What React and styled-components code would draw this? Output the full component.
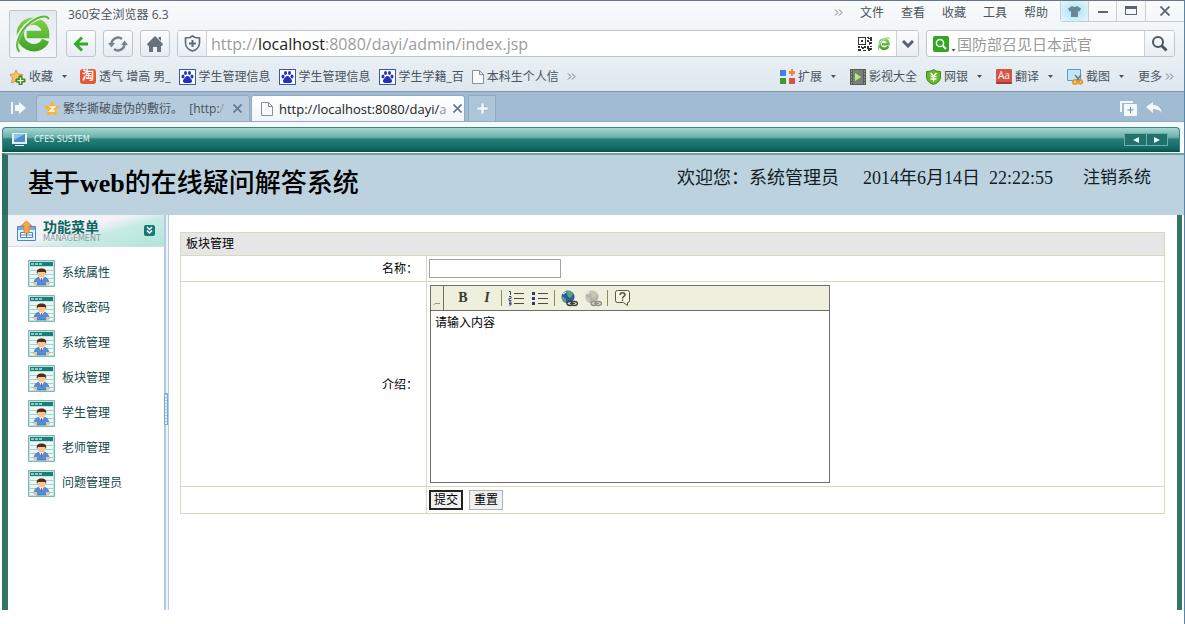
import React from 'react';
import styled, { createGlobalStyle, css } from 'styled-components';

const GlobalStyle = createGlobalStyle`
  *, *::before, *::after { box-sizing: border-box; }
  body {
    margin: 0;
    background: #fff;
    font-family: "Open Sans", "Noto Sans CJK SC", sans-serif;
    font-size: 12px;
    color: #4b545d;
  }
  button, input, textarea { font: inherit; color: inherit; }
  button { padding: 0; border: 0; background: none; white-space: nowrap; }
  a { color: inherit; text-decoration: none; }
  svg { display: block; flex: none; }
`;

/* ---------- browser window ---------- */

const Window = styled.div`
  display: flex;
  flex-direction: column;
  min-height: 100vh;
  border-top: 1px solid #66788a;
  border-right: 1px solid #5686a8;
`;

const Chrome = styled.header`
  background: linear-gradient(#f9fbfc, #edf2f6 50%, #dee7ef);
  border-bottom: 1px solid #8099ae;
`;

const ChromeTop = styled.div`
  display: flex;
  gap: 9px;
  padding-left: 9px;
`;

const LogoButton = styled.button`
  flex: none;
  width: 48px;
  height: 48px;
  margin-top: 9px;
  display: grid;
  place-items: center;
  background: linear-gradient(#e3eaf0, #f2f5f8);
  border: 1px solid #bcc7d2;
  border-radius: 2px;
`;

const ChromeMain = styled.div`
  flex: 1;
  min-width: 0;
`;

const TitleRow = styled.div`
  display: flex;
  justify-content: space-between;
  align-items: flex-start;
  height: 29px;
  padding-left: 2px;
`;

const WindowTitle = styled.span`
  line-height: 28px;
`;

const TitleMenu = styled.nav`
  display: flex;
  align-items: flex-start;
  gap: 17px;
  line-height: 24px;
  > svg { margin-top: 8px; }
`;

const WindowControls = styled.div`
  display: flex;
  height: 21px;
  margin-left: -5px;
  border: 1px solid #c5ced7;
  border-width: 0 0 1px 1px;
  border-radius: 0 0 0 3px;
`;

const ControlButton = styled.button`
  width: ${(p) => p.$width}px;
  display: grid;
  place-items: center;
  border-left: ${(p) => (p.$first ? 0 : '1px solid #c5ced7')};
  background: ${(p) => (p.$first ? 'radial-gradient(#a5e2f5, #e9f7fb)' : 'none')};
`;

const ToolRow = styled.div`
  display: flex;
  gap: 7px;
  height: 27px;
  padding-right: 9px;
`;

const ToolButton = styled.button`
  flex: none;
  width: 30px;
  display: grid;
  place-items: center;
  background: linear-gradient(#fcfdfd, #e6ecf2);
  border: 1px solid #bcc7d2;
  border-radius: 3px;
`;

const Field = styled.div`
  display: flex;
  align-items: center;
  min-width: 0;
  flex: ${(p) => (p.$search ? '0 0 249px' : '1 1 0')};
  background: #fff;
  border: 1px solid #bcc7d2;
  border-radius: 3px;
  overflow: hidden;
`;

const FieldButton = styled.button`
  flex: none;
  align-self: stretch;
  width: ${(p) => p.$width}px;
  display: grid;
  place-items: center;
  background: linear-gradient(#fbfcfd, #e9eef3);
  border: 0 solid #c9d2db;
  border-width: ${(p) => (p.$left ? '0 1px 0 0' : '0 0 0 1px')};
`;

const Url = styled.span`
  flex: 1;
  padding-left: 4px;
  font-size: 16px;
  line-height: 24px;
  color: #9c9c9c;
  white-space: nowrap;
  overflow: hidden;
  b { font-weight: 400; color: #1b1b1b; }
`;

const FieldIcons = styled.span`
  display: flex;
  align-items: center;
  gap: 5px;
  padding-right: 5px;
`;

const SearchIcons = styled.span`
  display: flex;
  align-items: flex-end;
  gap: 2px;
  padding-left: 6px;
`;

const SearchInput = styled.input`
  flex: 1;
  min-width: 0;
  padding: 0 0 0 1px;
  border: 0;
  outline: 0;
  font-size: 15px;
  &::placeholder { color: #999; opacity: 1; }
`;

const BookmarkRow = styled.div`
  display: flex;
  justify-content: space-between;
  height: 33px;
  padding: 4px 10px 0;
`;

const BookmarkGroup = styled.div`
  display: flex;
  align-items: center;
  gap: ${(p) => p.$gap}px;
`;

const Caret = styled.i`
  width: 5px;
  height: 3px;
  background: #4b545d;
  clip-path: polygon(0 0, 100% 0, 50% 100%);
`;

const Bookmark = styled.button`
  display: flex;
  align-items: center;
  gap: 3px;
  line-height: 18px;
  ${Caret} { margin: 0 5px 0 6px; }
`;

const TabBar = styled.div`
  display: flex;
  align-items: flex-end;
  height: 30px;
  background: #a1bcd2;
  border-bottom: 1px solid #93aac0;
`;

const TabBarButton = styled.button`
  width: ${(p) => p.$width}px;
  height: 26px;
  display: grid;
  place-items: center;
`;

const Tab = styled.div`
  display: flex;
  align-items: center;
  gap: ${(p) => (p.$active ? 6 : 3)}px;
  width: 214px;
  height: 26px;
  margin-right: 1px;
  padding: 0 7px 0 ${(p) => (p.$active ? 9 : 7)}px;
  border: 1px solid #8fabc3;
  border-bottom: 0;
  border-radius: 3px 3px 0 0;
  background: ${(p) => (p.$active ? 'linear-gradient(#fff, #f1f5f9)' : '#b5cbdd')};
  color: ${(p) => (p.$active ? '#222' : '#46515c')};
`;

const TabLabel = styled.a`
  flex: 1;
  white-space: pre;
  font-size: ${(p) => (p.$large ? 13 : 12)}px;
  line-height: 20px;
`;

const Faded = styled.span`
  color: #8f979f;
`;

const NewTab = styled.button`
  width: 28px;
  height: 26px;
  margin-left: 2px;
  display: grid;
  place-items: center;
  border: 1px solid #8fabc3;
  border-bottom: 0;
  background: #adc5d9;
`;

const TabTools = styled.div`
  display: flex;
  gap: 9px;
  align-items: center;
  height: 26px;
  margin-left: auto;
  padding-right: 22px;
`;

/* ---------- web page ---------- */

const Page = styled.main`
  flex: 1;
  display: flex;
  flex-direction: column;
  margin-bottom: 14px;
  padding: 5px 2px 0;
  background: linear-gradient(#f3faf9, #fff 60px);
  font-family: "Liberation Sans", "Noto Sans CJK SC", sans-serif;
`;

const SystemBar = styled.div`
  display: flex;
  align-items: center;
  justify-content: space-between;
  height: 25px;
  margin-right: 2px;
  padding: 0 11px 0 9px;
  border: 1px solid #43817e;
  border-bottom-color: #0a4f4b;
  border-radius: 4px 4px 0 0;
  background: linear-gradient(#a5d6d3, #6db0ac 40%, #288079 48%, #0f6a63 88%, #16524c);
`;

const SystemName = styled.div`
  display: flex;
  align-items: center;
  gap: 7px;
  font-family: "DejaVu Sans", sans-serif;
  font-size: 8px;
  color: #e2f5f3;
`;

const Pager = styled.div`
  display: flex;
  border: 1px solid #6bb0ab;
`;

const PagerButton = styled.button`
  width: 21px;
  height: 11px;
  display: grid;
  place-items: center;
  background: #23716c;
  & + & { border-left: 1px solid #6bb0ab; }
`;

const Banner = styled.div`
  display: flex;
  justify-content: space-between;
  align-items: flex-start;
  height: 62px;
  margin: 1px -2px 0 0;
  padding: 0 33px 0 20px;
  border-top: 2px solid #6fa39f;
  border-left: 6px solid #2f6f62;
  background: #bcd3df;
  font-family: "Liberation Serif", "Noto Sans CJK SC", serif;
  color: #101c26;
`;

const BannerTitle = styled.h1`
  margin: 0;
  font-size: 26px;
  font-weight: 500;
  line-height: 58px;
  color: #000;
`;

const BannerInfo = styled.div`
  display: flex;
  font-size: 18px;
  line-height: 46px;
  white-space: pre;
`;

const DateText = styled.time`
  margin: 0 30px 0 24px;
`;

const LogoutLink = styled.a`
  font-size: 17px;
`;

const Frame = styled.div`
  flex: 1;
  display: flex;
  border: solid #357565;
  border-width: 0 5px 0 6px;
`;

const Sidebar = styled.aside`
  flex: none;
  width: 156px;
`;

const SidebarHead = styled.div`
  display: flex;
  align-items: center;
  height: 32px;
  padding: 0 9px;
  border-bottom: 1px solid #d3dedd;
  background: linear-gradient(165deg, #f2f2f7 45%, #c7ebe4 62%, #b1e4db);
`;

const SidebarTitle = styled.h2`
  flex: 1;
  margin: 0 0 0 7px;
  font-size: 14px;
  line-height: 16px;
  color: #0d675f;
`;

const SidebarSubtitle = styled.small`
  display: block;
  font-family: "DejaVu Sans", sans-serif;
  font-size: 8px;
  font-weight: 400;
  line-height: 8px;
  color: #8d9a9a;
`;

const SideMenu = styled.ul`
  display: flex;
  flex-direction: column;
  gap: 8px;
  margin: 0;
  padding: 13px 0 0 20px;
  list-style: none;
`;

const SideLink = styled.a`
  display: flex;
  align-items: center;
  gap: 7px;
  line-height: 27px;
  color: #11474a;
`;

const Splitter = styled.div`
  flex: none;
  width: 5px;
  display: flex;
  align-items: center;
  padding-bottom: 8px;
  border: solid #b4cce3;
  border-width: 0 1px 0 2px;
  background: #edf4fb;
`;

const SplitterHandle = styled.button`
  width: 4px;
  height: 32px;
  margin-left: -2px;
  flex: none;
  border: 1px solid #7fa9c8;
  background: repeating-linear-gradient(#a9cbe0 0 1px, #dcecf6 1px 3px);
`;

const Content = styled.section`
  flex: 1;
  min-width: 0;
  padding: 17px 12px 20px 11px;
`;

const FormTable = styled.table`
  width: 100%;
  table-layout: fixed;
  border-collapse: collapse;
  color: #000;
`;

const cell = css`
  border: 1px solid #d8d8c3;
  padding: 3px 2px;
  font-weight: 400;
`;

const HeadCell = styled.th`
  ${cell}
  padding: 2px 5px;
  height: 23px;
  text-align: left;
  line-height: 18px;
  background: #e6e6e6;
`;

const LabelCell = styled.th`
  ${cell}
  padding: 2px 8px 4px 2px;
  text-align: right;
`;

const InputCell = styled.td`
  ${cell}
`;

const NameInput = styled.input`
  display: block;
  width: 132px;
  height: 19px;
  padding: 0 3px;
  border: 1px solid #a3a3a3;
  outline: 0;
`;

const Editor = styled.div`
  width: 400px;
  max-width: 100%;
  border: 1px solid #6e6e6e;
  margin-left: 1px;
`;

const EditorToolbar = styled.div`
  display: flex;
  align-items: center;
  height: 25px;
  background: #efefde;
  border-bottom: 1px solid #6e6e5e;
`;

const Gripper = styled.span`
  align-self: stretch;
  display: flex;
  align-items: flex-end;
  width: 13px;
  margin-right: 7px;
  padding: 0 0 4px 2px;
  border-right: 1px solid #6e6e5e;
`;

const EditorButton = styled.button`
  width: 24px;
  height: 22px;
  display: grid;
  place-items: center;
  font-family: "Liberation Serif", serif;
  font-size: 14px;
  font-weight: 700;
  color: #3b3b30;
  font-style: ${(p) => (p.$italic ? 'italic' : 'normal')};
`;

const ToolDivider = styled.i`
  width: 1px;
  height: 16px;
  margin: 0 2px;
  background: #8c8c5e;
`;

const EditorArea = styled.textarea`
  display: block;
  width: 100%;
  height: 171px;
  padding: 3px 4px;
  border: 0;
  outline: 0;
  resize: none;
  line-height: 18px;
  background: #fff;
`;

const FormActions = styled.div`
  display: flex;
  gap: 6px;
`;

const FormButton = styled.button`
  width: 34px;
  height: 20px;
  line-height: 16px;
  background: #f0f0f0;
  border: ${(p) => (p.$primary ? '2px solid #222' : '1px solid #b3b3b3')};
`;

/* ---------- icons ---------- */

const BrowserLogo = ({ size }) => (
  <svg width={size} height={size} viewBox="0 0 38 38" fill="none">
    <defs>
      <linearGradient id="leaf" x1="0" y1="0" x2="0" y2="38" gradientUnits="userSpaceOnUse">
        <stop offset="0" stopColor="#8bd650" />
        <stop offset="1" stopColor="#3a9f22" />
      </linearGradient>
    </defs>
    <path d="M31 25C28 32 20 33.500 14 30.500C5 26 5 14 12 9C20 4 31 8 31 19.500H13" stroke="url(#leaf)" strokeWidth="7" />
    <path d="M5 37C-1 29 7 12 21 5C28 2 33 2 35 6" stroke="#eef3f5" strokeWidth="4" />
    <path d="M6 36C0 29 8 12 22 4.500C28 1.500 33 1.500 34 5" stroke="#5cb936" strokeWidth="2" />
  </svg>
);

const BackIcon = () => (
  <svg width="17" height="16" viewBox="0 0 17 16" fill="none" stroke="#3aaa24" strokeWidth="3">
    <path d="M9 1.500 2.500 8 9 14.500M3 8h12" />
  </svg>
);

const ReloadIcon = () => (
  <svg width="20" height="18" viewBox="0 0 20 18" fill="none" stroke="#77838f" strokeWidth="2.5">
    <path d="M3.500 9A6.500 6.500 0 0 1 14 4M16.500 9A6.500 6.500 0 0 1 6 14" />
    <path d="M0 8h7l-3.500 4.500zM13 10h7l-3.500-4.500z" fill="#77838f" stroke="none" />
  </svg>
);

const HomeIcon = () => (
  <svg width="16" height="16" viewBox="0 0 16 16" fill="#66727f">
    <path d="M8 0 16 8l-1 2h-1v6H10v-5H6v5H2v-6H1L0 8zM11.500 1H14v4l-2.500-2.500z" />
  </svg>
);

const ShieldIcon = () => (
  <svg width="17" height="17" viewBox="0 0 17 17" fill="none" stroke="#5c6a79" strokeWidth="1.600">
    <path d="M8.500 1 11 2.500 15.500 3V8C15.500 12 12 15 8.500 16 5 15 1.500 12 1.500 8V3L6 2.500z" />
    <path d="M8.500 5v7M5 8.500h7" strokeWidth="2" />
  </svg>
);

const QrIcon = () => (
  <svg width="14" height="14" viewBox="0 0 14 14" fill="#333">
    <path fillRule="evenodd" d="M0 0h8v8H0zM1 1v6h6V1zM3 3h2v2H3zM9 0h2v1H9zM12 0h2v4h-2V2h-2V1h2zM9 3h2v2H9zM11 5h3v2h-2v1h-1zM0 9h2v2H0zM3 9h1v1h2V9h2v2H6v1H4v-1H3zM9 9h2v2h3v2h-2v1h-2v-2H9zM0 12h3v2H0zM5 13h3v1H5zM12 9h2v1h-2z" />
  </svg>
);

const ChevronDown = () => (
  <svg width="12" height="8" viewBox="0 0 12 8" fill="none" stroke="#536171" strokeWidth="3"><path d="m1 1 5 5 5-5" /></svg>
);

const SearchEngineIcon = () => (
  <svg width="16" height="16" viewBox="0 0 16 16" fill="none">
    <rect width="16" height="16" rx="2" fill="#2fa71f" />
    <circle cx="7" cy="7" r="3.600" stroke="#fff" strokeWidth="1.500" /><path d="m10 10 3 3" stroke="#fff" strokeWidth="2" />
  </svg>
);

const MagnifierIcon = () => (
  <svg width="17" height="17" viewBox="0 0 17 17" fill="none" stroke="#4d5762">
    <circle cx="7" cy="7" r="5" strokeWidth="2" /><path d="m10.500 10.500 5 5" strokeWidth="3" />
  </svg>
);

const ShirtIcon = () => (
  <svg width="13" height="11" viewBox="0 0 13 11" fill="#688797"><path d="M4 0Q6.500 2 9 0L13 2.500 11.500 5.500 10 5V11H3V5L1.500 5.500 0 2.500z" /></svg>
);

const MinimizeIcon = () => (
  <svg width="10" height="10" viewBox="0 0 10 10"><path d="M0 5h10v2H0z" fill="#5a6673" /></svg>
);

const MaximizeIcon = () => (
  <svg width="12" height="10" viewBox="0 0 12 10"><path fillRule="evenodd" d="M0 0h12v9H0zM1 3v5h10V3z" fill="#5a6673" /></svg>
);

const CloseIcon = ({ size = 9, color = '#5a6673' }) => (
  <svg width={size} height={size} viewBox="0 0 9 9" fill="none" stroke={color} strokeWidth="1.700"><path d="m.5.5 8 8m0-8-8 8" /></svg>
);

const FavoriteIcon = () => (
  <svg width="16" height="16" viewBox="0 0 16 16">
    <path d="m6 1 2 4 5 .5-3.500 3.500 1 5L6 12l-4.500 2 1-5L0 5.500 4.500 5z" fill="#f9c36c" stroke="#dc9348" />
    <path d="M9 7h3v3h3v3h-3v3H9v-3H6v-3h3z" fill="#55a531" stroke="#317b1d" />
    <path d="M10.500 8.500v6m-3-3h6" stroke="#fff" />
  </svg>
);

const TaobaoBox = styled.span`
  width: 16px;
  height: 15px;
  border-radius: 3px;
  background: #ea5532;
  color: #fff;
  font-size: 12px;
  font-weight: 700;
  line-height: 14px;
  text-align: center;
`;

const PawIcon = () => (
  <svg width="17" height="16" viewBox="0 0 17 16">
    <rect x=".5" y=".5" width="16" height="15" fill="#fff" stroke="#3659a7" />
    <g fill="#2531c4">
      <ellipse cx="4" cy="7.500" rx="1.500" ry="2" /><ellipse cx="6.500" cy="4" rx="1.500" ry="2" />
      <ellipse cx="10.500" cy="4" rx="1.500" ry="2" /><ellipse cx="13" cy="7.500" rx="1.500" ry="2" />
      <path d="M8.500 7c2 0 2.500 2 4 3.500 1.500 2-.5 4-2 3.500H6.500C5 14.500 3 12.500 4.500 10.500 6 9 6.500 7 8.500 7z" />
    </g>
  </svg>
);

const PageIcon = () => (
  <svg width="12" height="14" viewBox="0 0 12 14" fill="#f9fafb" stroke="#87919a">
    <path d="M.5.500h7l4 4v9H.500zM7.500.500v4h4" />
  </svg>
);

const MoreIcon = () => (
  <svg width="9" height="7" viewBox="0 0 9 7" fill="none" stroke="#6a747d"><path d="m1 .5 3 3-3 3m4-6 3 3-3 3" /></svg>
);

const ExtensionsIcon = () => (
  <svg width="15" height="15" viewBox="0 0 15 15">
    <path fill="#4a7de6" d="M0 1h6v6H0z" /><path fill="#3b9c2a" d="M0 9h6v6H0z" />
    <path fill="#d9534d" d="M9 9h6v6H9z" /><path fill="#f08b34" d="M11 0h2v2h2v3h-2v2h-2V5H9V2h2z" />
  </svg>
);

const VideoIcon = () => (
  <svg width="16" height="16" viewBox="0 0 16 16">
    <path fill="#555d56" d="M0 0h16v16H0z" /><path fill="#788078" d="M3 1h10v14H3z" />
    <path d="M1.500 1v14m13-14v14" stroke="#8c948c" strokeDasharray="2 1" /><path fill="#b4ed70" d="m5 4 6 4-6 4z" />
  </svg>
);

const BankIcon = () => (
  <svg width="15" height="16" viewBox="0 0 15 16">
    <path d="M7.500.500 10 2l4.500.500V8c0 4-3.500 6.500-7 7.500-3.500-1-7-3.500-7-7.500V2.500L5 2z" fill="#68b52b" stroke="#3f8d17" />
    <path d="m4.500 4 3 3 3-3m-6 3.500h6m-6 2.500h6M7.500 7v5.500" stroke="#fff" strokeWidth="1.500" fill="none" />
  </svg>
);

const TranslateBox = styled.span`
  width: 16px;
  height: 15px;
  background: #d65345;
  border-bottom: 2px solid #a3392f;
  border-radius: 1px;
  color: #fff;
  font-size: 10px;
  line-height: 13px;
  text-align: center;
`;

const ScreenshotIcon = () => (
  <svg width="16" height="16" viewBox="0 0 16 16" fill="none">
    <path d="M.5.500h13v11H.500z" fill="#c2e5f8" stroke="#559ecc" /><path d="m8 6 5 6m1-6-5 6" stroke="#617d8c" strokeWidth="1.500" />
    <circle cx="8" cy="13" r="2" stroke="#ec9624" strokeWidth="2" /><circle cx="13.500" cy="13" r="1.700" stroke="#ec9624" strokeWidth="2" />
  </svg>
);

const PanelIcon = () => (
  <svg width="15" height="12" viewBox="0 0 15 12" fill="#f4f8fb"><path d="M0 0h2v12H0zM4 3h4V0l7 6-7 6V9H4z" /></svg>
);

const StarIcon = () => (
  <svg width="16" height="15" viewBox="0 0 16 15">
    <path d="m8 0 2.500 4.500L16 5.500 12 9.500l1 5.500-5-2.500L3 15l1-5.500L0 5.500l5.500-1z" fill="#f5b52f" />
    <path d="M5.500 6h5l-4.500 4h5" stroke="#fff" strokeWidth="1.500" fill="none" />
  </svg>
);

const PlusIcon = () => (
  <svg width="11" height="11" viewBox="0 0 11 11"><path d="M4 0h3v4h4v3H7v4H4V7H0V4h4z" fill="#f3f7fb" stroke="#94adc2" strokeWidth=".5" /></svg>
);

const CloneTabIcon = () => (
  <svg width="17" height="15" viewBox="0 0 17 15" fill="none">
    <path d="M1 11V1h12" stroke="#f4f8fb" strokeWidth="2" /><rect x="4" y="3" width="13" height="12" rx="1" fill="#f4f8fb" />
    <path d="M10.500 6v6m-3-3h6" stroke="#6e8ba5" />
  </svg>
);

const UndoIcon = () => (
  <svg width="16" height="12" viewBox="0 0 16 12" fill="#f4f8fb"><path d="M7 0v3c5 0 8 3 9 8-2-3-5-4-9-4v4L0 5z" /></svg>
);

const MonitorIcon = () => (
  <svg width="15" height="13" viewBox="0 0 15 13">
    <path fill="#e4edf2" d="M0 0h15v11H0z" /><path fill="#4b91cd" d="M2 1h11v8H2z" /><path fill="#8cc2ea" d="M2 1h11L2 7z" /><path fill="#e4edf2" d="M3 12h9v1H3z" />
  </svg>
);

const ArrowIcon = ({ right }) => (
  <svg width="6" height="6" viewBox="0 0 6 6" fill="#e9f8f6"><path d={right ? 'M0 0l6 3-6 3z' : 'M6 0v6L0 3z'} /></svg>
);

const ManagementIcon = () => (
  <svg width="19" height="20" viewBox="0 0 19 20">
    <path d="M.500 5.500h18v14H.500z" fill="#e4f1fd" stroke="#4787c3" />
    <path d="M1 6h17v3H1z" fill="#72aee1" /><path d="M3.500 11.500h12v5h-12zm0 2.500h12M9.500 11v6" fill="#fff" stroke="#4787c3" />
    <path d="M9.500 0 15 5h-3v7H7V5H4z" fill="#f6a84c" stroke="#d88532" />
  </svg>
);

const CollapseIcon = () => (
  <svg width="11" height="11" viewBox="0 0 11 11">
    <rect width="11" height="11" rx="2" fill="#147a75" /><path d="m3 2 2.500 2.500L8 2M3 5.500 5.500 8 8 5.500" fill="none" stroke="#fff" strokeWidth="1.500" />
  </svg>
);

const UserCardIcon = () => (
  <svg width="27" height="27" viewBox="0 0 27 27">
    <path d="M.500.500h26v26H.500z" fill="#bfe3de" stroke="#80b5b0" />
    <path d="M2 2h23v4H2z" fill="#188079" /><path d="M3 4h3m1 0h3m1 0h3" stroke="#b7e4df" strokeWidth="1.500" />
    <path d="M2 7h23v18H2z" fill="#edf8f6" />
    <path d="M2 10.500h23m-23 4h23m-23 4h23m-23 4h23" stroke="#a4d2cd" />
    <path d="M6 24c0-4 2-6 4-6.500h7c2 .5 4 2.500 4 6.500l-3 1H9z" fill="#4f8fe0" stroke="#2c5fae" strokeWidth=".6" />
    <path d="M6 22h3v3H6zM18 22h3v3h-3z" fill="#f4c08b" /><path d="M11 17h5l-2.500 4z" fill="#fff" /><path d="M13 18h1v4h-1z" fill="#c5473b" />
    <circle cx="13.500" cy="13.500" r="4" fill="#f6c593" />
    <path d="M9 14C8 10 10 8.500 13.500 8.500s5.500 1.500 4.500 5.500l-1-2h-7z" fill="#57291b" />
  </svg>
);

const OrderedListIcon = () => (
  <svg width="16" height="15" viewBox="0 0 16 15" fill="none">
    <path d="M6 2.500h10M6 7.500h10M6 12.500h10" stroke="#4c4c3c" />
    <path d="M1 .5h1.500V4M1 5.500h2v2H1v2h2.500M1 11h2v3H1m0-1.500h2" stroke="#3a3f7e" />
  </svg>
);

const BulletListIcon = () => (
  <svg width="16" height="13" viewBox="0 0 16 13">
    <path d="M6 1.500h10M6 6.500h10M6 11.500h10" stroke="#4c4c3c" /><path d="M0 0h3v3H0zM0 5h3v3H0zM0 10h3v3H0z" fill="#30367f" />
  </svg>
);

const GlobeIcon = ({ muted }) => (
  <svg width="17" height="17" viewBox="0 0 17 17">
    <circle cx="7" cy="7" r="6.500" fill={muted ? '#b5b5ab' : '#3156a8'} />
    <path d="M5 1c3-1 6 1 7 3l-2 4-3-1-1-3zM1 6l4 3v4C2 12 0 9 1 6z" fill={muted ? '#c6c6bb' : '#55a47a'} />
    <path d="M2 4 5 2" stroke="#e3edf5" strokeWidth="1.500" />
    <g fill={muted ? '#d8d8cd' : '#ddd'} stroke={muted ? '#919188' : '#3c3c36'} strokeWidth="1.300">
      <ellipse cx="9" cy="13.500" rx="3" ry="2" /><ellipse cx="13.500" cy="13.500" rx="3" ry="2" />
    </g>
    <path d="M9 13.500h5" stroke={muted ? '#919188' : '#3c3c36'} />
  </svg>
);

const HelpIcon = () => (
  <svg width="15" height="16" viewBox="0 0 15 16" fill="none" stroke="#55553a">
    <path d="M2.500.500h10q2 0 2 2v8q0 2-2 2v3l-4-3h-6q-2 0-2-2v-8q0-2 2-2z" fill="#f8f8e8" />
    <path d="M5 5c0-3 5-3 5 0 0 1.500-2.500 1.500-2.500 3.500M7.500 9.500v1.500" strokeWidth="1.500" />
  </svg>
);

/* ---------- data ---------- */

const titleMenus = ['文件', '查看', '收藏', '工具', '帮助'];

const leftBookmarks = [
  { icon: <TaobaoBox>淘</TaobaoBox>, label: '透气 增高 男_' },
  { icon: <PawIcon />, label: '学生管理信息' },
  { icon: <PawIcon />, label: '学生管理信息' },
  { icon: <PawIcon />, label: '学生学籍_百' },
  { icon: <PageIcon />, label: '本科生个人信' },
];

const rightBookmarks = [
  { icon: <ExtensionsIcon />, label: '扩展', caret: true },
  { icon: <VideoIcon />, label: '影视大全' },
  { icon: <BankIcon />, label: '网银', caret: true },
  { icon: <TranslateBox>Aa</TranslateBox>, label: '翻译', caret: true },
  { icon: <ScreenshotIcon />, label: '截图', caret: true },
];

const sideItems = ['系统属性', '修改密码', '系统管理', '板块管理', '学生管理', '老师管理', '问题管理员'];

const BookmarkItem = ({ icon, label, caret }) => (
  <Bookmark>{icon}{label}{caret && <Caret />}</Bookmark>
);

function BrowserChrome() {
  return (
    <Chrome>
      <ChromeTop>
        <LogoButton aria-label="360"><BrowserLogo size={40} /></LogoButton>
        <ChromeMain>
          <TitleRow>
            <WindowTitle>360安全浏览器 6.3</WindowTitle>
            <TitleMenu>
              <MoreIcon />
              {titleMenus.map((m) => <button key={m}>{m}</button>)}
              <WindowControls>
                <ControlButton $first $width={27} aria-label="皮肤"><ShirtIcon /></ControlButton>
                <ControlButton $width={28} aria-label="最小化"><MinimizeIcon /></ControlButton>
                <ControlButton $width={29} aria-label="最大化"><MaximizeIcon /></ControlButton>
                <ControlButton $width={39} aria-label="关闭"><CloseIcon size={10} /></ControlButton>
              </WindowControls>
            </TitleMenu>
          </TitleRow>
          <ToolRow>
            <ToolButton aria-label="后退"><BackIcon /></ToolButton>
            <ToolButton aria-label="刷新"><ReloadIcon /></ToolButton>
            <ToolButton aria-label="主页"><HomeIcon /></ToolButton>
            <Field>
              <FieldButton $left $width={29} aria-label="安全"><ShieldIcon /></FieldButton>
              <Url>http://<b>localhost</b>:8080/dayi/admin/index.jsp</Url>
              <FieldIcons><QrIcon /><BrowserLogo size={14} /></FieldIcons>
              <FieldButton $width={22} aria-label="展开"><ChevronDown /></FieldButton>
            </Field>
            <Field $search>
              <SearchIcons><SearchEngineIcon /><Caret /></SearchIcons>
              <SearchInput aria-label="搜索" placeholder="国防部召见日本武官" />
              <FieldButton $width={30} aria-label="搜索"><MagnifierIcon /></FieldButton>
            </Field>
          </ToolRow>
        </ChromeMain>
      </ChromeTop>
      <BookmarkRow>
        <BookmarkGroup $gap={8}>
          <BookmarkItem icon={<FavoriteIcon />} label="收藏" caret />
          {leftBookmarks.map((b, i) => <BookmarkItem key={i} {...b} />)}
          <MoreIcon />
        </BookmarkGroup>
        <BookmarkGroup $gap={9}>
          {rightBookmarks.map((b) => <BookmarkItem key={b.label} {...b} />)}
          <Bookmark>更多 <MoreIcon /></Bookmark>
        </BookmarkGroup>
      </BookmarkRow>
    </Chrome>
  );
}

function Tabs() {
  return (
    <TabBar>
      <TabBarButton $width={36} aria-label="侧边栏"><PanelIcon /></TabBarButton>
      <Tab>
        <StarIcon />
        <TabLabel href="#tab1">{'繁华撕破虚伪的敷衍。  [http:'}<Faded>/</Faded></TabLabel>
        <button aria-label="关闭标签"><CloseIcon color="#64798d" /></button>
      </Tab>
      <Tab $active>
        <PageIcon />
        <TabLabel $large href="#tab2">http://localhost:8080/dayi/<Faded>a</Faded></TabLabel>
        <button aria-label="关闭标签"><CloseIcon color="#64798d" /></button>
      </Tab>
      <NewTab aria-label="新标签"><PlusIcon /></NewTab>
      <TabTools>
        <button aria-label="复制标签"><CloneTabIcon /></button>
        <button aria-label="恢复标签"><UndoIcon /></button>
      </TabTools>
    </TabBar>
  );
}

function RichEditor() {
  return (
    <Editor>
      <EditorToolbar>
        <Gripper><svg width="7" height="3" viewBox="0 0 7 3"><path d="M0 2.500 2 .500h5" fill="none" stroke="#999987" /></svg></Gripper>
        <EditorButton type="button">B</EditorButton>
        <EditorButton type="button" $italic>I</EditorButton>
        <ToolDivider />
        <EditorButton type="button" aria-label="编号列表"><OrderedListIcon /></EditorButton>
        <EditorButton type="button" aria-label="项目列表"><BulletListIcon /></EditorButton>
        <ToolDivider />
        <EditorButton type="button" aria-label="插入链接"><GlobeIcon /></EditorButton>
        <EditorButton type="button" aria-label="取消链接"><GlobeIcon muted /></EditorButton>
        <ToolDivider />
        <EditorButton type="button" aria-label="帮助"><HelpIcon /></EditorButton>
      </EditorToolbar>
      <EditorArea id="intro" defaultValue="请输入内容" />
    </Editor>
  );
}

function BoardForm() {
  return (
    <form onSubmit={(e) => e.preventDefault()}>
      <FormTable>
        <colgroup><col width="25%" /><col /></colgroup>
        <thead>
          <tr><HeadCell colSpan={2}>板块管理</HeadCell></tr>
        </thead>
        <tbody>
          <tr>
            <LabelCell scope="row"><label htmlFor="name">名称：</label></LabelCell>
            <InputCell><NameInput id="name" type="text" /></InputCell>
          </tr>
          <tr>
            <LabelCell scope="row"><label htmlFor="intro">介绍：</label></LabelCell>
            <InputCell><RichEditor /></InputCell>
          </tr>
          <tr>
            <InputCell />
            <InputCell>
              <FormActions>
                <FormButton $primary type="submit">提交</FormButton>
                <FormButton type="reset">重置</FormButton>
              </FormActions>
            </InputCell>
          </tr>
        </tbody>
      </FormTable>
    </form>
  );
}

export default function App() {
  return (
    <Window>
      <GlobalStyle />
      <BrowserChrome />
      <Tabs />
      <Page>
        <SystemBar>
          <SystemName><MonitorIcon />CFES SUSTEM</SystemName>
          <Pager>
            <PagerButton aria-label="上一页"><ArrowIcon /></PagerButton>
            <PagerButton aria-label="下一页"><ArrowIcon right /></PagerButton>
          </Pager>
        </SystemBar>
        <Banner>
          <BannerTitle>基于<b>web</b>的在线疑问解答系统</BannerTitle>
          <BannerInfo>
            <span>欢迎您：系统管理员</span>
            <DateText>{'2014年6月14日  22:22:55'}</DateText>
            <LogoutLink href="#logout">注销系统</LogoutLink>
          </BannerInfo>
        </Banner>
        <Frame>
          <Sidebar>
            <SidebarHead>
              <ManagementIcon />
              <SidebarTitle>功能菜单<SidebarSubtitle>MANAGEMENT</SidebarSubtitle></SidebarTitle>
              <button aria-label="折叠"><CollapseIcon /></button>
            </SidebarHead>
            <SideMenu>
              {sideItems.map((s) => (
                <li key={s}><SideLink href="#menu"><UserCardIcon />{s}</SideLink></li>
              ))}
            </SideMenu>
          </Sidebar>
          <Splitter><SplitterHandle aria-label="收起菜单" /></Splitter>
          <Content><BoardForm /></Content>
        </Frame>
      </Page>
    </Window>
  );
}
